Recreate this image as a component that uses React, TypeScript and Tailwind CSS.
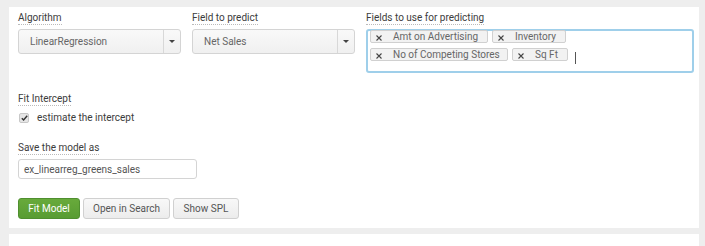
const font = { fontFamily: 'Roboto, "Liberation Sans", sans-serif' };

function Label({ text }: { text: string }) {
  return (
    <div className="flex h-[18px] items-start">
      <span className="block text-[10px] leading-[13px] text-[#3c3c3c] border-b border-dotted border-[#bbb]">
        {text}
      </span>
    </div>
  );
}

function Dropdown({ value }: { value: string }) {
  return (
    <div className="flex h-[25px] w-[163px] items-stretch rounded-[3px] border border-[#d4d4d4] bg-gradient-to-b from-[#f9f9f9] to-[#f0f0f0]">
      <div className="flex flex-1 items-center pl-[11px] text-[10px] text-[#666]">{value}</div>
      <div className="flex w-[17px] items-center justify-center border-l border-[#d8d8d8]">
        <div className="h-0 w-0 border-x-[3px] border-t-[3px] border-x-transparent border-t-[#444]" />
      </div>
    </div>
  );
}

function Token({ text, w }: { text: string; w: string }) {
  return (
    <div className={`flex h-[13px] items-center rounded-[2px] border border-[#d0d0d0] bg-[#f2f2f2] text-[10px] text-[#666] ${w}`}>
      <svg width="6" height="6" viewBox="0 0 6 6" className="ml-[5px] mr-[11px] mt-[2px]">
        <path d="M0.5 0.5L5.5 5.5M5.5 0.5L0.5 5.5" stroke="#444" strokeWidth="1.1" />
      </svg>
      <span className="leading-none">{text}</span>
    </div>
  );
}

export default function App() {
  return (
    <div className="min-h-[246px] bg-[#eeeeee] pl-[9px] pr-[6px] pt-[7px]" style={font}>
      <div className="bg-white pl-[9px] pr-[5px] pt-[4px] pb-[9px]">
        <div className="flex gap-[11px]">
          <div>
            <Label text="Algorithm" />
            <Dropdown value="LinearRegression" />
          </div>
          <div>
            <Label text="Field to predict" />
            <Dropdown value="Net Sales" />
          </div>
          <div className="flex-1">
            <Label text="Fields to use for predicting" />
            <div className="h-[44px] rounded-[3px] border-2 border-[#9fcfea] pl-[2px]">
              <div className="-mt-px flex flex-wrap gap-x-[4px] gap-y-[5px] w-[210px]">
                <Token text="Amt on Advertising" w="w-[118px]" />
                <Token text="Inventory" w="w-[74px]" />
                <Token text="No of Competing Stores" w="w-[138px]" />
                <div className="flex items-start gap-[7px]">
                  <Token text="Sq Ft" w="w-[56px]" />
                  <div className="mt-[4px] h-[12px] w-px bg-[#555]" />
                </div>
              </div>
            </div>
          </div>
        </div>

        <div className="mt-[19px]">
          <Label text="Fit Intercept" />
          <div className="flex h-[15px] items-center gap-[8px] pl-px">
            <div className="flex h-[10px] w-[10px] items-center justify-center rounded-[2px] border border-[#c8c8c8] bg-[#e6e6e6]">
              <svg width="7" height="6" viewBox="0 0 7 6">
                <path d="M0.8 3.2L2.6 5L6.2 0.8" fill="none" stroke="#333" strokeWidth="1.4" />
              </svg>
            </div>
            <span className="text-[10px] text-[#3c3c3c]">estimate the intercept</span>
          </div>
        </div>

        <div className="mt-[16px]">
          <Label text="Save the model as" />
          <div className="flex h-[20px] w-[179px] items-center rounded-[3px] border border-[#d4d4d4] pl-[5px] text-[10px] text-[#555]">
            ex_linearreg_greens_sales
          </div>
        </div>

        <div className="mt-[19px] flex gap-[3px]">
          <button className="h-[21px] w-[62px] rounded-[3px] border border-[#4f8f2f] bg-gradient-to-b from-[#68aa3b] to-[#589c33] text-[10px] text-white">
            Fit Model
          </button>
          <button className="h-[21px] w-[87px] rounded-[3px] border border-[#d0d0d0] bg-gradient-to-b from-[#f8f8f8] to-[#ececec] text-[10px] text-[#555]">
            Open in Search
          </button>
          <button className="h-[21px] w-[66px] rounded-[3px] border border-[#d0d0d0] bg-gradient-to-b from-[#f8f8f8] to-[#ececec] text-[10px] text-[#555]">
            Show SPL
          </button>
        </div>
      </div>
      <div className="mt-[6px] h-[12px] bg-white" />
    </div>
  );
}
